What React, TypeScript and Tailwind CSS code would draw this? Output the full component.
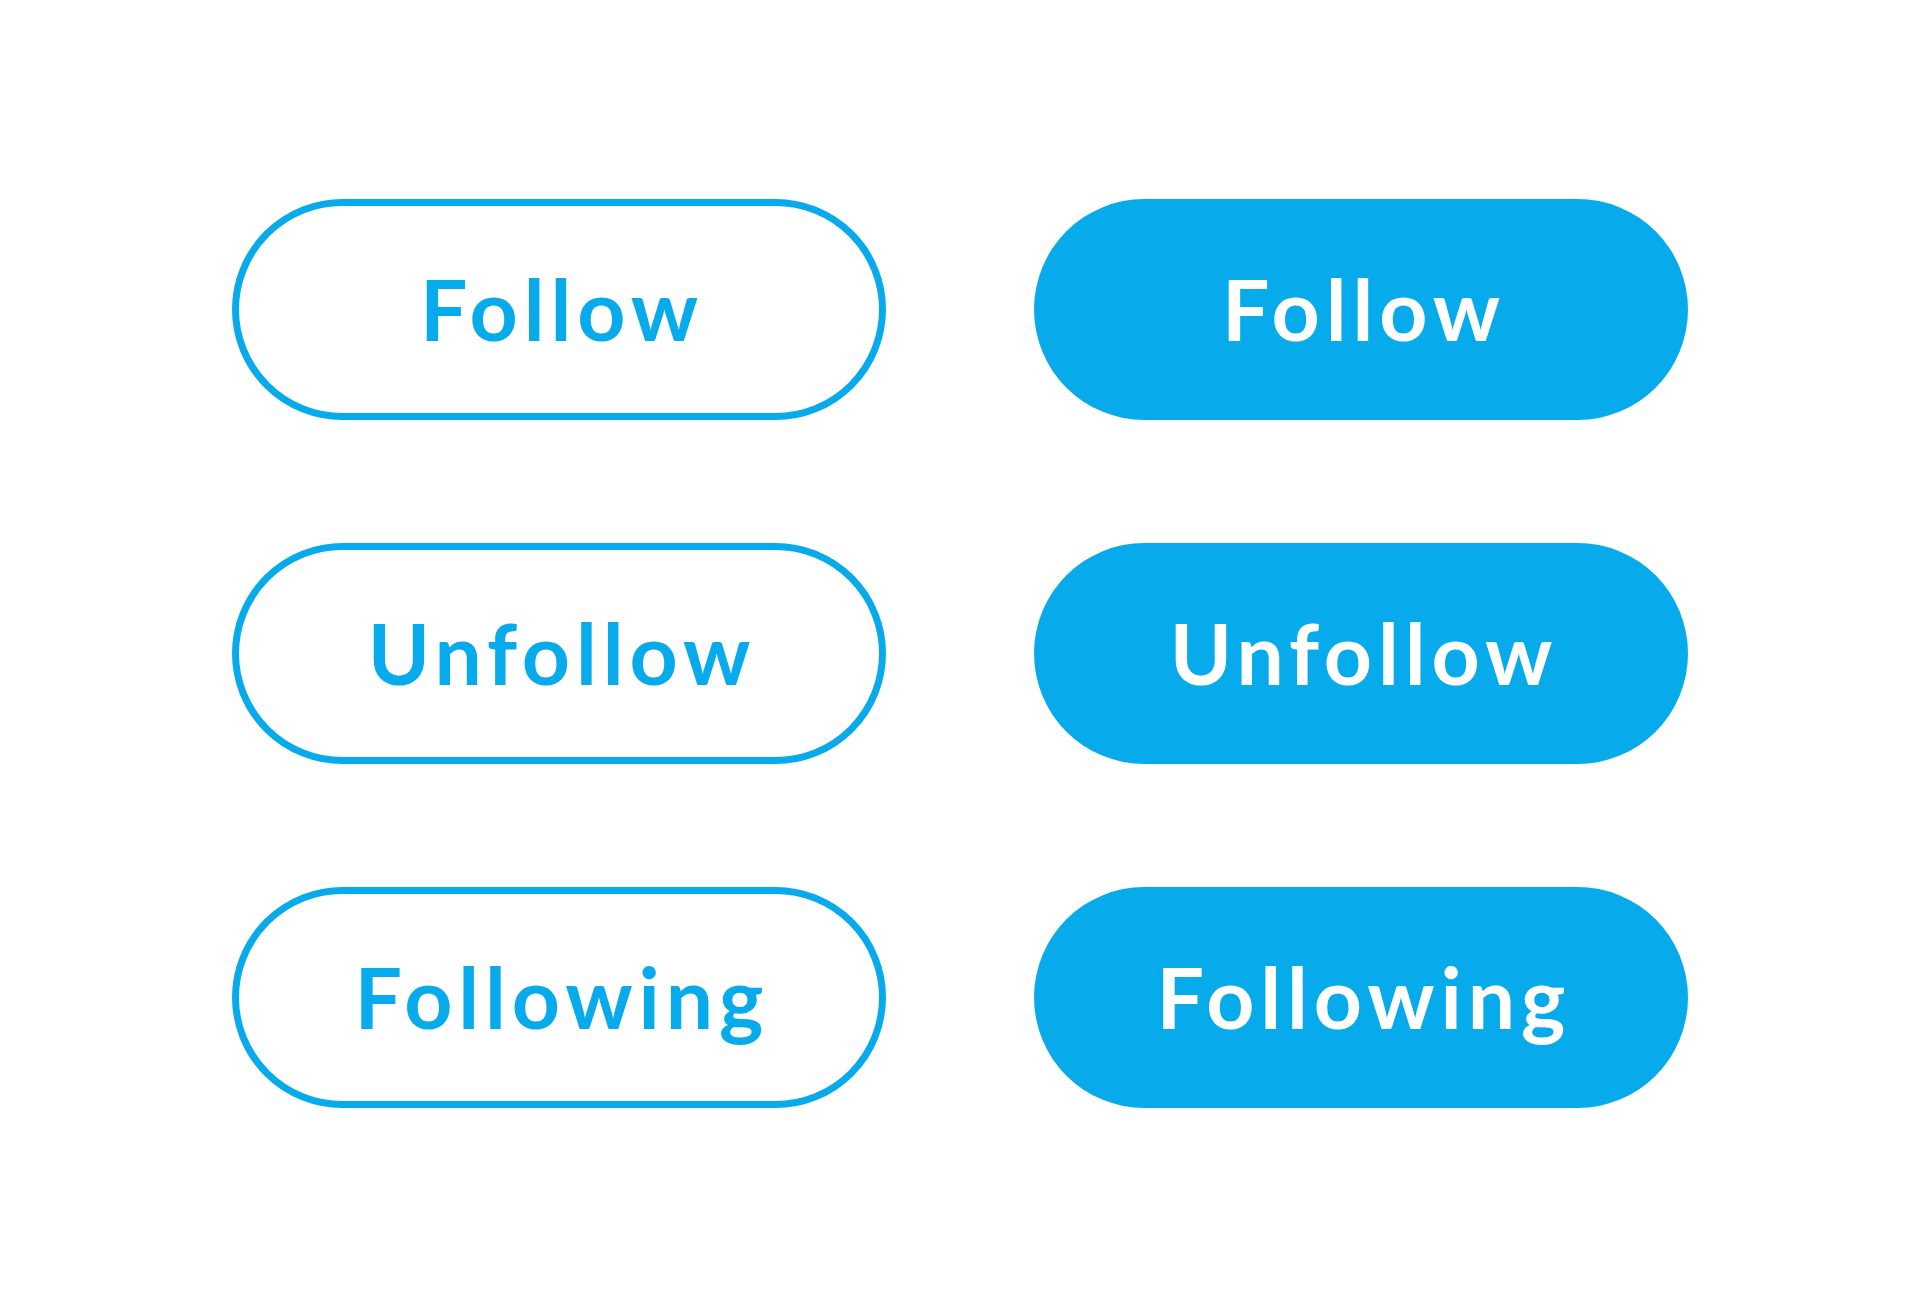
const labels = ["Follow", "Unfollow", "Following"];

function FollowButton({ label, filled }: { label: string; filled?: boolean }) {
  return (
    <button
      type="button"
      className={
        filled
          ? "flex h-[221px] w-[654px] items-center justify-center rounded-full bg-[#07abec] text-[84px] font-bold tracking-[0.07em] text-white"
          : "flex h-[221px] w-[654px] items-center justify-center rounded-full border-[7px] border-[#07abec] bg-white text-[84px] font-bold tracking-[0.07em] text-[#07abec]"
      }
      style={{ fontFamily: "Lato, 'Open Sans', sans-serif" }}
    >
      {/* negative margin cancels the trailing letter-spacing so the word sits centred */}
      <span className="mr-[-0.07em] leading-none">{label}</span>
    </button>
  );
}

export default function App() {
  return (
    <main className="flex min-h-screen w-full items-center justify-center bg-white">
      <div className="grid grid-cols-2 gap-x-[148px] gap-y-[123px]">
        {labels.map((label) => (
          <div key={label} className="contents">
            <FollowButton label={label} />
            <FollowButton label={label} filled />
          </div>
        ))}
      </div>
    </main>
  );
}
